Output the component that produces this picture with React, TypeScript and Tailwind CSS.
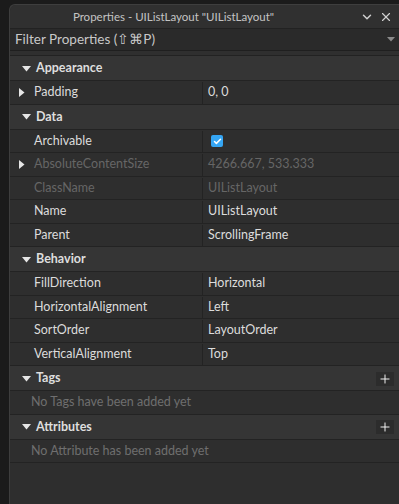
import { Check, ChevronDown, X, Plus } from 'lucide-react'

type Row =
  | { kind: 'header'; label: string; plus?: boolean }
  | { kind: 'prop'; name: string; value?: string; expand?: boolean; disabled?: boolean; check?: boolean }
  | { kind: 'empty'; text: string }

const rows: Row[] = [
  { kind: 'header', label: 'Appearance' },
  { kind: 'prop', name: 'Padding', value: '0, 0', expand: true },
  { kind: 'header', label: 'Data' },
  { kind: 'prop', name: 'Archivable', check: true },
  { kind: 'prop', name: 'AbsoluteContentSize', value: '4266.667, 533.333', expand: true, disabled: true },
  { kind: 'prop', name: 'ClassName', value: 'UIListLayout', disabled: true },
  { kind: 'prop', name: 'Name', value: 'UIListLayout' },
  { kind: 'prop', name: 'Parent', value: 'ScrollingFrame' },
  { kind: 'header', label: 'Behavior' },
  { kind: 'prop', name: 'FillDirection', value: 'Horizontal' },
  { kind: 'prop', name: 'HorizontalAlignment', value: 'Left' },
  { kind: 'prop', name: 'SortOrder', value: 'LayoutOrder' },
  { kind: 'prop', name: 'VerticalAlignment', value: 'Top' },
  { kind: 'header', label: 'Tags', plus: true },
  { kind: 'empty', text: 'No Tags have been added yet' },
  { kind: 'header', label: 'Attributes', plus: true },
  { kind: 'empty', text: 'No Attribute has been added yet' },
]

function TriDown() {
  return (
    <svg width="9" height="6" viewBox="0 0 9 6" className="fill-[#e6e6e6]">
      <path d="M0 0h9L4.5 5.5z" />
    </svg>
  )
}

function TriRight() {
  return (
    <svg width="6" height="9" viewBox="0 0 6 9" className="fill-[#e6e6e6]">
      <path d="M0 0v9l5.5-4.5z" />
    </svg>
  )
}

function RowView({ row }: { row: Row }) {
  if (row.kind === 'header') {
    return (
      <div className="flex h-[25px] items-center border-b border-[#232323] bg-[#353535] pt-[1px]">
        <div className="flex w-[26px] justify-end pr-[5px]">
          <TriDown />
        </div>
        <span className="text-[12.5px] font-bold text-[#dedede]">{row.label}</span>
        {row.plus && (
          <div className="ml-auto mr-[5px] flex h-[14px] w-[18px] items-center justify-center bg-[#2c2c2c]">
            <Plus size={14} strokeWidth={1.6} className="text-white" />
          </div>
        )}
      </div>
    )
  }
  if (row.kind === 'empty') {
    return (
      <div className="flex h-[23.5px] items-center border-b border-[#232323] bg-[#2e2e2e] pl-[21px] pt-[1px] text-[12.5px] text-[#6f6f6f]">
        {row.text}
      </div>
    )
  }
  const text = row.disabled ? 'text-[#666666]' : 'text-[#dcdcdc]'
  return (
    <div className="flex h-[23.5px] border-b border-[#232323] bg-[#2e2e2e] pt-[1px] text-[12.5px]">
      <div className="flex w-[193px] items-center border-r border-[#232323]">
        <div className="flex w-[24px] justify-center">{row.expand && <TriRight />}</div>
        <span className={text}>{row.name}</span>
      </div>
      <div className={`flex flex-1 items-center pl-[5px] ${text}`}>
        {row.check ? (
          <div className="ml-[3px] flex h-[12px] w-[12px] items-center justify-center rounded-[2px] bg-[#35a6f4]">
            <Check size={9} strokeWidth={4} className="text-white" />
          </div>
        ) : (
          row.value
        )}
      </div>
    </div>
  )
}

export default function App() {
  return (
    <div className="h-[504px] w-[399px] overflow-hidden bg-[#1b1b1b] pl-[9px] pt-[4px] font-['Lato',sans-serif]">
      <div className="flex h-full flex-col rounded-tl-[6px] border-l border-t border-[#3e3e3e] bg-[#2e2e2e]">
        {/* Title bar */}
        <div className="relative flex h-[24px] items-center justify-center rounded-tl-[6px] border-b border-[#222222] bg-[#303030] pr-[62px]">
          <span className="text-[11.5px] text-[#c4c4c4]">Properties - UIListLayout "UIListLayout"</span>
          <div className="absolute right-[6px] top-[5px] flex items-center gap-[5px] text-[#d0d0d0]">
            <ChevronDown size={14} strokeWidth={2.5} />
            <X size={14} strokeWidth={2} />
          </div>
        </div>

        {/* Filter */}
        <div className="flex h-[22px] items-center justify-between border-b border-[#1f1f1f] bg-[#2a2a2a] pl-[5px] pr-[4px]">
          <span className="text-[13.5px] text-[#c8c8c8]">Filter Properties (⇧⌘P)</span>
          <svg width="8" height="5" viewBox="0 0 8 5" className="fill-[#8a8a8a]">
            <path d="M0 0h8L4 4.5z" />
          </svg>
        </div>
        <div className="h-[5px] border-b border-[#222222] bg-[#2f2f2f]" />

        {/* Property list */}
        <div className="flex flex-col">
          {rows.map((r, i) => (
            <RowView key={i} row={r} />
          ))}
        </div>
      </div>
    </div>
  )
}
